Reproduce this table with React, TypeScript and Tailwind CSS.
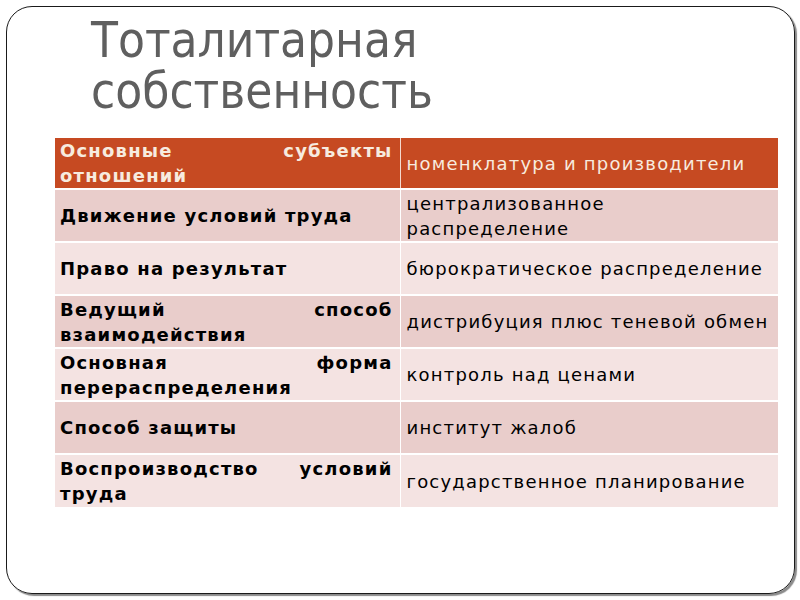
import React from "react"

const rows: { left: string; right: string[]; dark: boolean }[] = [
  { left: "Движение условий труда", right: ["централизованное", "распределение"], dark: true },
  { left: "Право на результат", right: ["бюрократическое распределение"], dark: false },
  { left: "Ведущий способ взаимодействия", right: ["дистрибуция плюс теневой обмен"], dark: true },
  { left: "Основная форма перераспределения", right: ["контроль над ценами"], dark: false },
  { left: "Способ защиты", right: ["институт жалоб"], dark: true },
  { left: "Воспроизводство условий труда", right: ["государственное планирование"], dark: false },
]

export default function App() {
  return (
    <div className="w-[800px] h-[600px] bg-white p-[6px] pr-[5px] pb-[6px]">
      <div className="h-full rounded-[26px] border border-[#1a1a1a] shadow-[2px_2px_1px_#8a8a8a] pt-[8px] pl-[48px] pr-[15px]">
        <h1
          className="pl-[36px] text-[49px] leading-[51px] text-[#5f5f5f]"
          style={{ fontFamily: '"DejaVu Sans Condensed", "Open Sans", sans-serif', fontWeight: 400 }}
        >
          Тоталитарная
          <br />
          собственность
        </h1>
        <table
          className="mt-[21px] w-[723px] border-collapse text-[18px] leading-[25px] tracking-[1.2px]"
          style={{ fontFamily: '"DejaVu Sans", Verdana, sans-serif' }}
        >
          <tbody>
            <tr className="h-[51px] bg-[#c64a22] text-[#f7ebdf]">
              <td className="w-[345px] border-r border-[#f4d9cf] pl-[5px] pr-[7px] font-bold text-justify align-middle">
                Основные субъекты отношений
              </td>
              <td className="pl-[6px] pr-[4px] align-middle">номенклатура и производители</td>
            </tr>
            {rows.map((r, i) => (
              <tr
                key={i}
                className={`h-[53px] border-t-2 border-white ${r.dark ? "bg-[#e9cdcb]" : "bg-[#f4e3e2]"} text-black`}
              >
                <td className="w-[345px] border-r border-white pl-[5px] pr-[7px] font-bold text-justify align-middle">
                  {r.left}
                </td>
                <td className="pl-[6px] pr-[4px] align-middle">
                  {r.right.map((line, j) => (
                    <div key={j}>{line}</div>
                  ))}
                </td>
              </tr>
            ))}
          </tbody>
        </table>
      </div>
    </div>
  )
}
